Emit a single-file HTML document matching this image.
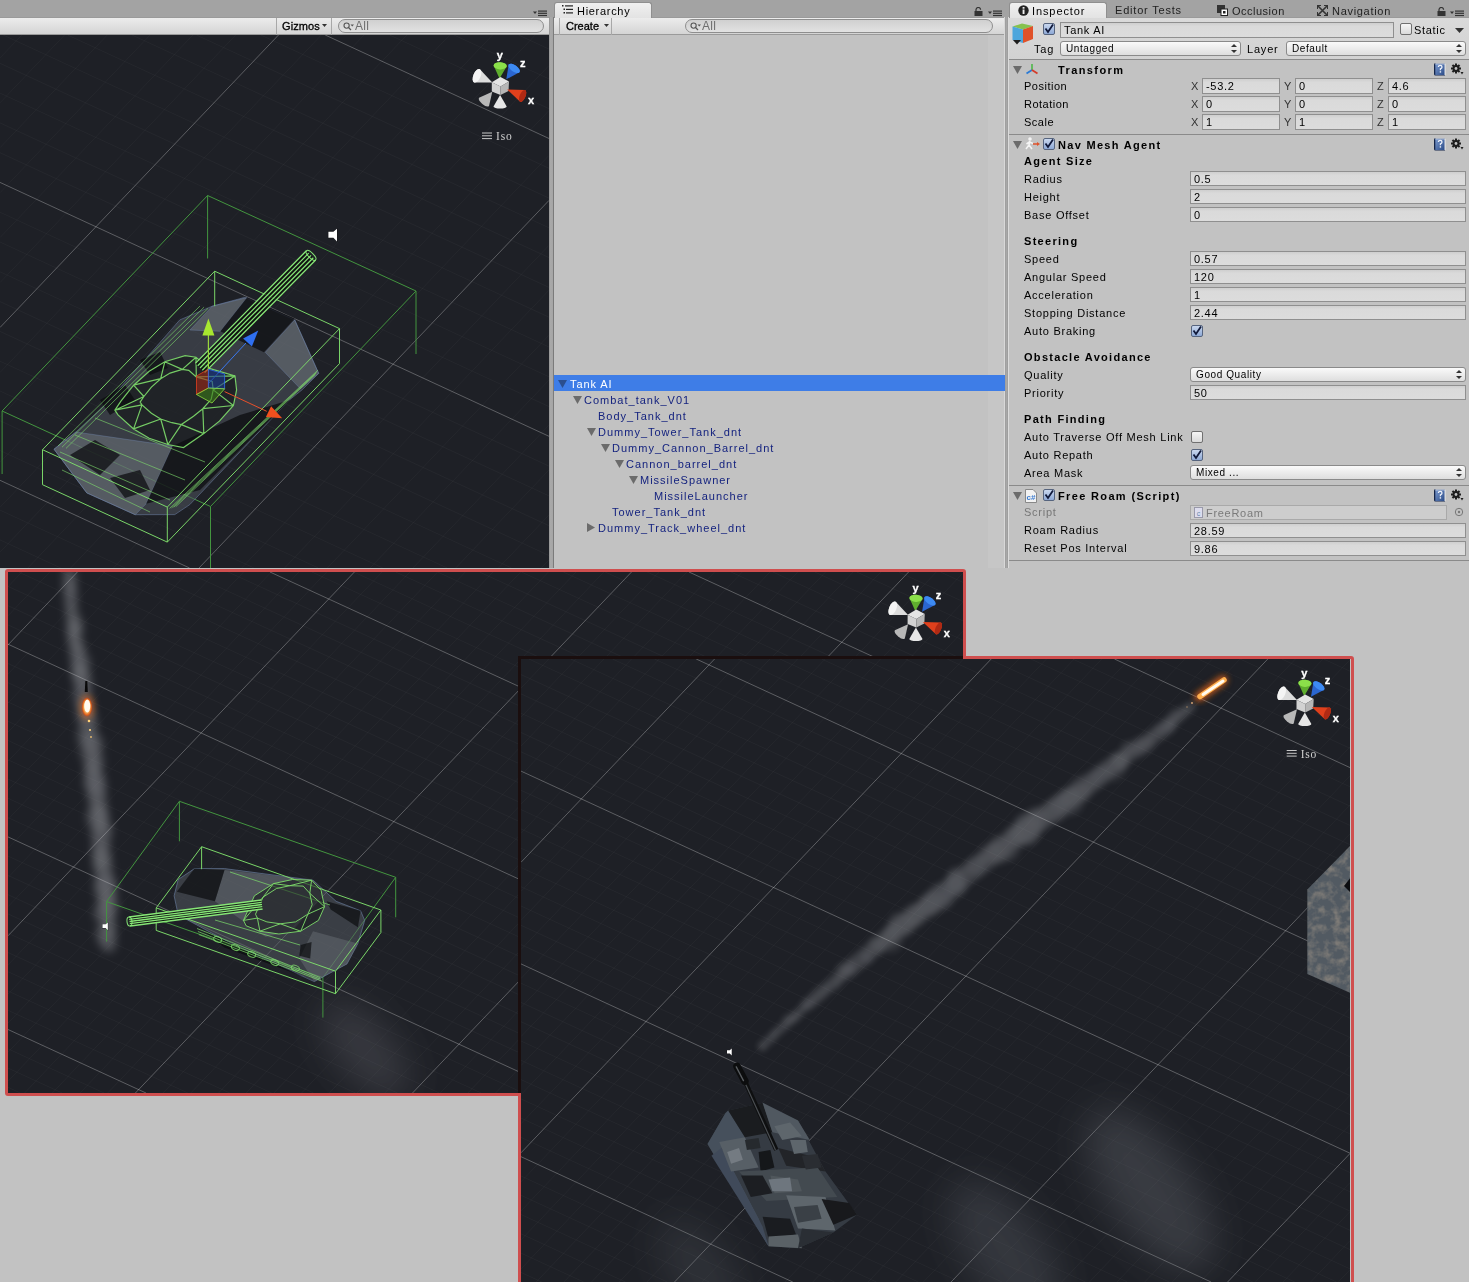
<!DOCTYPE html>
<html><head><meta charset="utf-8"><title>Unity</title>
<style>
html,body{margin:0;padding:0}
body{width:1469px;height:1282px;position:relative;overflow:hidden;background:#c2c2c2;font-family:"Liberation Sans",sans-serif;font-size:11px;color:#000}
.a{position:absolute}
svg{position:absolute;display:block;overflow:hidden}
.tb{background:linear-gradient(#ececec,#d4d4d4);border-bottom:1px solid #9a9a9a;box-sizing:border-box}
.tab{background:linear-gradient(#f0f0f0,#e3e3e3);border:1px solid #8f8f8f;border-bottom:none;border-radius:3px 3px 0 0;box-sizing:border-box}
.lbl{position:absolute;white-space:nowrap;line-height:12px;will-change:transform}
.fld{position:absolute;box-sizing:border-box;border:1px solid #8f8f8f;background:linear-gradient(#cfcfcf,#dadada 25%,#dcdcdc);height:15px}
.ftxt{position:absolute;left:3px;top:1px;line-height:12px;white-space:nowrap;letter-spacing:0.7px;will-change:transform}
.dd{position:absolute;box-sizing:border-box;border:1px solid #8a8a8a;border-radius:3px;background:linear-gradient(#fafafa,#dedede);height:15px}
.updn{position:absolute;top:2px;width:6px;height:9px;background:linear-gradient(#333,#333) 0 0/0 0 no-repeat}
.updn:before{content:"";position:absolute;left:0;top:0;border-left:3px solid transparent;border-right:3px solid transparent;border-bottom:3.5px solid #333}
.updn:after{content:"";position:absolute;left:0;top:5.5px;border-left:3px solid transparent;border-right:3px solid transparent;border-top:3.5px solid #333}
.cb{position:absolute;box-sizing:border-box;width:12px;height:12px;border:1px solid #707070;border-radius:2px;background:linear-gradient(#f6f6f6,#dadada)}
.cbon{background:linear-gradient(#c9d7ee,#8ea9d6);border-color:#56647e}
</style></head>
<body>
<svg width="0" height="0" style="left:0;top:0"><defs><filter id="blur6" x="-50%" y="-50%" width="200%" height="200%"><feGaussianBlur stdDeviation="6"/></filter><filter id="blur3" x="-50%" y="-50%" width="200%" height="200%"><feGaussianBlur stdDeviation="3"/></filter><filter id="blur15" x="-50%" y="-50%" width="200%" height="200%"><feGaussianBlur stdDeviation="18"/></filter><filter id="blur4" x="-50%" y="-50%" width="200%" height="200%"><feGaussianBlur stdDeviation="4"/></filter><filter id="blur2" x="-50%" y="-50%" width="200%" height="200%"><feGaussianBlur stdDeviation="2.5"/></filter><filter id="noiseTex" x="0" y="0" width="100%" height="100%"><feTurbulence type="fractalNoise" baseFrequency="0.12" numOctaves="3" seed="11"/><feColorMatrix type="matrix" values="0 0 0 0 0.50  0 0 0 0 0.40  0 0 0 0 0.30  1.8 0 0 0 -0.75"/><feComposite in2="SourceGraphic" operator="in"/></filter><filter id="blur1" x="-50%" y="-50%" width="200%" height="200%"><feGaussianBlur stdDeviation="1.2"/></filter><radialGradient id="flame" cx="50%" cy="50%" r="50%"><stop offset="0" stop-color="#fffbe8"/><stop offset="0.45" stop-color="#ffd27a"/><stop offset="0.8" stop-color="#e8631a" stop-opacity="0.9"/><stop offset="1" stop-color="#c23a10" stop-opacity="0"/></radialGradient></defs></svg>
<div class="a" style="left:0;top:0;width:1469px;height:17px;background:#a3a3a3"></div>
<div class="a tb" style="left:0;top:17px;width:549px;height:18px;border-top:1px solid #9a9a9a"></div>
<svg style="left:0px;top:35px;will-change:transform" width="549" height="533" viewBox="0 35 549 533">
<rect x="0" y="35" width="549" height="533" fill="#1e2026"/>
<path d="M518.5 35.0L549.0 49.1M454.0 35.0L549.0 78.9M389.6 35.0L549.0 108.7M260.8 35.0L549.0 168.3M196.4 35.0L549.0 198.1M132.0 35.0L549.0 227.8M21.8 35.0L0.0 57.9M67.6 35.0L549.0 257.6M64.6 35.0L0.0 102.8M3.2 35.0L549.0 287.4M107.3 35.0L0.0 147.7M0.0 63.3L549.0 317.2M150.1 35.0L0.0 192.7M0.0 93.1L549.0 347.0M192.9 35.0L0.0 237.6M0.0 122.9L549.0 376.8M235.7 35.0L0.0 282.6M0.0 152.7L549.0 406.6M321.3 35.0L-0.0 372.5M0.0 212.2L549.0 466.1M364.1 35.0L-0.0 417.4M0.0 242.0L549.0 495.9M406.9 35.0L0.0 462.4M0.0 271.8L549.0 525.7M449.7 35.0L0.0 507.3M0.0 301.6L549.0 555.5M492.5 35.0L0.0 552.2M0.0 331.4L511.6 568.0M535.3 35.0L27.8 568.0M0.0 361.2L447.2 568.0M549.0 65.5L70.6 568.0M0.0 391.0L382.8 568.0M549.0 110.5L113.4 568.0M0.0 420.7L318.4 568.0M549.0 155.4L156.2 568.0M0.0 450.5L254.0 568.0M549.0 245.3L241.7 568.0M0.0 510.1L125.2 568.0M549.0 290.2L284.5 568.0M0.0 539.9L60.8 568.0M549.0 335.2L327.3 568.0M549.0 380.1L370.1 568.0M549.0 425.1L412.9 568.0M549.0 470.0L455.7 568.0M549.0 515.0L498.5 568.0M549.0 559.9L541.3 568.0" stroke="#ffffff" stroke-opacity="0.032" stroke-width="1" fill="none"/>
<path d="M325.2 35.0L549.0 138.5M278.5 35.0L-0.0 327.5M0.0 182.4L549.0 436.3M549.0 200.4L199.0 568.0M0.0 480.3L189.6 568.0" stroke="#ffffff" stroke-opacity="0.28" stroke-width="1" fill="none"/>
<path d="M2.1 411.0L207.6 195.5L416.0 291.0L210.5 506.5ZM207.6 195.5V258.5M416.0 291.0V354.0M2.1 411.0V474.0M210.5 506.5V569.5" stroke="#43953f" stroke-opacity="1.0" stroke-width="1.0" fill="none"/>
<polygon points="212.2,306.2 244.7,297.4 294.6,319.9 318.7,373.4 302.1,389.8 289.6,399.8 189.8,504.6 174.8,514.6 135.2,514.7 86.8,492.9 54.0,449.2 75.9,432.0 105.0,405.0 179.8,319.9" fill="#4e545c" fill-opacity="0.55" stroke="#6d82a6" stroke-opacity="0.55" stroke-width="1"/>
<polygon points="294.8,320.0 318.7,373.4 300.4,388.8 265.3,352.3" fill="#7a8088" fill-opacity="0.45" stroke="#7088b0" stroke-opacity="0.4"/>
<polygon points="54.0,449.2 75.9,432.0 172.6,446.1 146.1,503.8 135.2,514.7 86.8,492.9" fill="#7a8088" fill-opacity="0.45" stroke="#7088b0" stroke-opacity="0.4"/>
<polygon points="212.2,306.2 247.0,297.6 220.4,331.3 190.0,330.0" fill="#7a8088" fill-opacity="0.45" stroke="#7088b0" stroke-opacity="0.4"/>
<polygon points="247.0,297.6 294.8,318.6 263.9,352.3 220.4,331.3" fill="#08090b" fill-opacity="0.7"/>
<polygon points="172.6,446.1 240.0,415.0 290.0,400.0 200.0,490.0 146.1,503.8" fill="#08090b" fill-opacity="0.7"/>
<polygon points="70.0,455.0 95.0,440.0 120.0,455.0 100.0,475.0" fill="#08090b" fill-opacity="0.7"/>
<polygon points="110.0,478.0 140.0,470.0 150.0,490.0 125.0,498.0" fill="#08090b" fill-opacity="0.7"/>
<polygon points="140.0,360.0 160.0,352.0 168.0,368.0 150.0,375.0" fill="#08090b" fill-opacity="0.7"/>
<polygon points="100.0,400.0 125.0,385.0 135.0,400.0 110.0,415.0" fill="#08090b" fill-opacity="0.7"/>
<path d="M42.5 449.7L214.7 271.2L339.5 328.6L167.3 507.1ZM214.7 271.2V306.2M339.5 328.6V363.6M42.5 449.7V484.7M167.3 507.1V542.1M42.5 484.7L167.3 542.1L339.5 363.6" stroke="#7ede6c" stroke-opacity="0.95" stroke-width="1.0" fill="none"/>
<path d="M169.5 508.5L318.0 370.0M171.6 507.9L317.1 371.5M173.7 507.3L316.2 373.0M175.8 506.7L315.3 374.5M58.0 446.0L200.0 306.0M62.0 447.2L204.0 307.2M66.0 448.4L208.0 308.4M60 452L170 500M75 435L185 480M95 418L205 462M62 470L150 512" stroke="#7ede6c" stroke-opacity="0.6" stroke-width="1" fill="none"/>
<polygon points="114.9,410.2 121.1,400.8 133.6,385.2 149.2,371.2 164.8,361.8 185.1,355.6 196.0,357.2 208.5,368.1 235.0,375.9 236.6,389.9 233.4,405.5 219.4,421.1 203.8,433.6 183.5,447.6 167.9,444.5 149.2,438.3 133.6,428.9 118.0,414.9" fill="#0c0e10" fill-opacity="0.55"/><path d="M114.9 410.2L121.1 400.8L133.6 385.2L149.2 371.2L164.8 361.8L185.1 355.6L196.0 357.2L208.5 368.1L235.0 375.9L236.6 389.9L233.4 405.5L219.4 421.1L203.8 433.6L183.5 447.6L167.9 444.5L149.2 438.3L133.6 428.9L118.0 414.9ZM140.1 402.1L143.9 396.5L151.4 387.1L160.7 378.7L170.1 373.1L182.3 369.4L188.8 370.3L196.3 376.9L212.2 381.5L213.2 389.9L211.2 399.3L202.8 408.7L193.5 416.2L181.3 424.6L171.9 422.7L160.7 419.0L151.4 413.3L142.0 404.9ZM114.9 410.2L143.9 396.5M133.6 385.2L143.9 396.5M133.6 385.2L160.7 378.7M164.8 361.8L160.7 378.7M164.8 361.8L182.3 369.4M196.0 357.2L182.3 369.4M196.0 357.2L196.3 376.9M235.0 375.9L196.3 376.9M235.0 375.9L213.2 389.9M233.4 405.5L213.2 389.9M233.4 405.5L202.8 408.7M203.8 433.6L202.8 408.7M203.8 433.6L181.3 424.6M167.9 444.5L181.3 424.6M167.9 444.5L160.7 419.0M133.6 428.9L160.7 419.0M133.6 428.9L142.0 404.9M114.9 410.2L142.0 404.9" stroke="#7ede6c" stroke-width="1.2" stroke-opacity="0.9" fill="none"/>
<polygon points="306.4,250.8 195.4,363.4 204.6,372.6 315.6,260.0" fill="#0e100e" opacity="0.8"/><path d="M315.6 260.0L204.6 372.6M313.3 257.7L202.3 370.3M311.0 255.4L200.0 368.0M308.7 253.1L197.7 365.7M306.4 250.8L195.4 363.4" stroke="#86e676" stroke-opacity="1.0" stroke-width="1.3" fill="none"/><ellipse cx="311.0" cy="255.4" rx="2.5" ry="6.5" transform="rotate(134.6 311.0 255.4)" fill="none" stroke="#86e676" stroke-opacity="1.0"/>
<path d="M208.4 370.6 V335" stroke="#9ad63a" stroke-width="1.2"/>
<polygon points="208.4,318.6 202.4,335.5 214.4,335.5" fill="#a8e830"/>
<path d="M209 383 L246 343" stroke="#3a78f0" stroke-width="1"/>
<polygon points="258.3,330.6 243.1,338.5 251.9,346.5" fill="#2f6ff0"/>
<path d="M224.6 391.6 L266.7 411.3" stroke="#e8502a" stroke-width="1"/>
<polygon points="282.2,418.3 271.1,406.3 265.9,417.1" fill="#f0501e"/>
<polygon points="196.5,376 208.4,369.2 208.4,388 196.5,394.5" fill="#a02818" fill-opacity="0.6" stroke="#e04020" stroke-width="0.8"/>
<polygon points="208.4,369.2 224.6,374 224.6,388.8 208.4,388" fill="#1a3a90" fill-opacity="0.6" stroke="#3070f0" stroke-width="0.8"/>
<polygon points="196.5,394.5 208.4,388 224.6,388.8 212,403" fill="#3a7a18" fill-opacity="0.6" stroke="#90e040" stroke-width="0.8"/>
<g transform="translate(328.4 228.8) scale(1.0)"><path d="M-0.5 2.5 H5.2 L9.2 -0.6 V13.3 L5.2 9.5 H-0.5Z" fill="#111" opacity="0.7"/><path d="M0 3 H5 L8.6 0 V12.7 L5 9 H0Z" fill="#fff"/></g>
<g transform="translate(0 0)">
<path d="M492.3 82.4L479.9 69.2A7.2 3.6 -66.7 0 0 474.1 82.4Z" fill="#dcdcdc"/><ellipse cx="477.0" cy="75.8" rx="7.2" ry="3.6" transform="rotate(-66.7 477.0 75.8)" fill="#f4f4f4"/>
<path d="M492.3 91.8L479.0 97.8A6.5 2.9 -140.6 0 0 489.0 106.0Z" fill="#b8b8b8"/>
<path d="M500.1 95.0L493.5 106.5A6.6 2.1 180.0 0 0 506.7 106.5Z" fill="#e6e6e6"/>
<path d="M499.5 78.5L506.8 66.2A6.6 3.6 3.2 0 0 493.6 65.4Z" fill="#5fae2e"/><ellipse cx="500.2" cy="65.8" rx="6.6" ry="3.6" transform="rotate(3.2 500.2 65.8)" fill="#8be04a"/>
<path d="M506.3 79.3L519.5 72.2A6.6 3.3 35.6 0 0 508.7 64.6Z" fill="#2b66d0"/><ellipse cx="514.1" cy="68.4" rx="6.6" ry="3.3" transform="rotate(35.6 514.1 68.4)" fill="#3d8af2"/>
<path d="M491.8 82.3 L500.5 77 L509 81.6 L500.5 86.6Z" fill="#e4e4e4"/>
<path d="M491.8 82.3 L500.5 86.6 L500.5 95 L491.8 91.6Z" fill="#d2d2d2"/>
<path d="M500.5 86.6 L509 81.6 L508.5 91 L500.5 95Z" fill="#b6b6b6"/>
<path d="M507.1 89.4L520.1 101.8A6.4 2.9 112.8 0 0 525.1 90.0Z" fill="#e0401c"/><ellipse cx="522.6" cy="95.9" rx="6.4" ry="2.9" transform="rotate(112.8 522.6 95.9)" fill="#b02a14"/>
<text x="499.7" y="59.3" font-family="Liberation Sans" font-weight="bold" font-size="11" fill="#fff" stroke="#fff" stroke-width="0.3" text-anchor="middle">y</text>
<text x="522.7" y="66.8" font-family="Liberation Sans" font-weight="bold" font-size="11" fill="#fff" stroke="#fff" stroke-width="0.3" text-anchor="middle">z</text>
<text x="531" y="104" font-family="Liberation Sans" font-weight="bold" font-size="11" fill="#fff" stroke="#fff" stroke-width="0.3" text-anchor="middle">x</text>
<path d="M482 133 H492 M482 135.8 H492 M482 138.6 H492" stroke="#c8c8c8" stroke-width="1"/>
<text x="496" y="140.3" font-family="Liberation Serif" font-size="11.5" fill="#d0d0d0" letter-spacing="0.8">Iso</text>
</g>
</svg><div class="a" style="left:549px;top:17px;width:5px;height:551px;background:linear-gradient(90deg,#8a8a8a 0,#a9a9a9 1px,#a6a6a6 3.5px,#7b7b7b 3.6px,#7b7b7b 4.5px,#dadada 4.6px)"></div>
<div class="a tb" style="left:554px;top:17px;width:451px;height:18px;border-top:1px solid #9a9a9a"></div>
<div class="a tab" style="left:554px;top:2px;width:98px;height:16px"></div>
<div class="a" style="left:988px;top:35px;width:16px;height:533px;background:#c6c6c6"></div>
<div class="a" style="left:1004px;top:17px;width:5px;height:551px;background:linear-gradient(90deg,#d8d8d8 0,#d8d8d8 0.8px,#9c9c9c 1px,#a8a8a8 2.5px,#9a9a9a 4px,#dcdcdc 4.3px)"></div>
<div class="a" style="left:1009px;top:17px;width:460px;height:43px;background:linear-gradient(#dadada,#d2d2d2);border-top:1px solid #9a9a9a;box-sizing:border-box"></div>
<div class="a tab" style="left:1009px;top:2px;width:98px;height:16px"></div>
<div class="a" style="left:276px;top:18px;width:1px;height:17px;background:#a8a8a8"></div>
<div class="lbl" style="left:282px;top:20px;font-size:11px;letter-spacing:0.1px;color:#000;-webkit-text-stroke:0.3px #000">Gizmos</div>
<svg class="a" style="left:322px;top:24px" width="5" height="3"><path d="M0 0 L5 0 L2.5 3Z" fill="#333"/></svg>
<div class="a" style="left:331px;top:18px;width:1px;height:17px;background:#a8a8a8"></div>
<div class="a" style="left:338px;top:19px;width:206px;height:14px;box-sizing:border-box;border:1px solid #8e8e8e;border-radius:7px;background:linear-gradient(#d0d0d0,#e2e2e2)"><svg width="14" height="10" style="left:4px;top:2px"><circle cx="3.6" cy="3.6" r="2.6" stroke="#555" stroke-width="1.1" fill="none"/><path d="M5.5 5.5 L8 8" stroke="#555" stroke-width="1.3"/><path d="M7.5 2.5 L11 2.5 L9.25 4.5Z" fill="#555"/></svg><div class="ftxt" style="left:16px;top:-0.5px;color:#6e6e6e;font-size:12px;letter-spacing:0.3px">All</div></div>
<svg class="a" style="left:533px;top:10px" width="15" height="7"><path d="M0 1.5 L4 1.5 L2 4 Z" fill="#333"/><rect x="5" y="0.5" width="9" height="1.2" fill="#333"/><rect x="5" y="2.7" width="9" height="1.2" fill="#333"/><rect x="5" y="4.9" width="9" height="1.2" fill="#333"/></svg>
<svg class="a" style="left:562px;top:5px" width="12" height="9"><rect x="0" y="0" width="1.5" height="1.5" fill="#222"/><rect x="3" y="0.3" width="8" height="1.2" fill="#222"/><rect x="1.5" y="3.5" width="1.5" height="1.5" fill="#222"/><rect x="4" y="3.8" width="7" height="1.2" fill="#222"/><rect x="1.5" y="7" width="1.5" height="1.5" fill="#222"/><rect x="4" y="7.3" width="7" height="1.2" fill="#222"/></svg>
<div class="lbl" style="left:577px;top:5px;font-size:11px;letter-spacing:0.7px;">Hierarchy</div>
<div class="a" style="left:559px;top:18px;width:1px;height:17px;background:#a8a8a8"></div>
<div class="lbl" style="left:565.5px;top:20px;font-size:11px;letter-spacing:0px;color:#000;-webkit-text-stroke:0.3px #000">Create</div>
<svg class="a" style="left:604px;top:24px" width="5" height="3"><path d="M0 0 L5 0 L2.5 3Z" fill="#333"/></svg>
<div class="a" style="left:611px;top:18px;width:1px;height:17px;background:#a8a8a8"></div>
<div class="a" style="left:685px;top:19px;width:308px;height:14px;box-sizing:border-box;border:1px solid #8e8e8e;border-radius:7px;background:linear-gradient(#d0d0d0,#e2e2e2)"><svg width="14" height="10" style="left:4px;top:2px"><circle cx="3.6" cy="3.6" r="2.6" stroke="#555" stroke-width="1.1" fill="none"/><path d="M5.5 5.5 L8 8" stroke="#555" stroke-width="1.3"/><path d="M7.5 2.5 L11 2.5 L9.25 4.5Z" fill="#555"/></svg><div class="ftxt" style="left:16px;top:-0.5px;color:#6e6e6e;font-size:12px;letter-spacing:0.3px">All</div></div>
<svg class="a" style="left:974px;top:7px" width="9" height="9"><path d="M2 4 V2.8 A2.3 2.3 0 0 1 6.6 2.8" stroke="#333" stroke-width="1.2" fill="none"/><rect x="0.5" y="4" width="8" height="5" fill="#333"/></svg>
<svg class="a" style="left:988px;top:10px" width="15" height="7"><path d="M0 1.5 L4 1.5 L2 4 Z" fill="#333"/><rect x="5" y="0.5" width="9" height="1.2" fill="#333"/><rect x="5" y="2.7" width="9" height="1.2" fill="#333"/><rect x="5" y="4.9" width="9" height="1.2" fill="#333"/></svg>
<div class="a" style="left:554px;top:375px;width:451px;height:16px;background:#3e7de7"></div>
<svg class="a" style="left:558px;top:380px" width="9" height="8"><path d="M0 0 L9 0 L4.5 8 Z" fill="#2b4f8f"/></svg>
<div class="lbl" style="left:570px;top:378px;font-size:11px;letter-spacing:0.9px;color:#fff;">Tank AI</div>
<svg class="a" style="left:572.5px;top:395.5px" width="9" height="8"><path d="M0 0 L9 0 L4.5 8 Z" fill="#6b6b6b"/></svg>
<div class="lbl" style="left:584px;top:394px;font-size:11px;letter-spacing:1.0px;color:#15237f;">Combat_tank_V01</div>
<div class="lbl" style="left:598px;top:410px;font-size:11px;letter-spacing:1.0px;color:#15237f;">Body_Tank_dnt</div>
<svg class="a" style="left:586.5px;top:427.5px" width="9" height="8"><path d="M0 0 L9 0 L4.5 8 Z" fill="#6b6b6b"/></svg>
<div class="lbl" style="left:598px;top:426px;font-size:11px;letter-spacing:1.0px;color:#15237f;">Dummy_Tower_Tank_dnt</div>
<svg class="a" style="left:600.5px;top:443.5px" width="9" height="8"><path d="M0 0 L9 0 L4.5 8 Z" fill="#6b6b6b"/></svg>
<div class="lbl" style="left:612px;top:442px;font-size:11px;letter-spacing:1.0px;color:#15237f;">Dummy_Cannon_Barrel_dnt</div>
<svg class="a" style="left:614.5px;top:459.5px" width="9" height="8"><path d="M0 0 L9 0 L4.5 8 Z" fill="#6b6b6b"/></svg>
<div class="lbl" style="left:626px;top:458px;font-size:11px;letter-spacing:1.0px;color:#15237f;">Cannon_barrel_dnt</div>
<svg class="a" style="left:628.5px;top:475.5px" width="9" height="8"><path d="M0 0 L9 0 L4.5 8 Z" fill="#6b6b6b"/></svg>
<div class="lbl" style="left:640px;top:474px;font-size:11px;letter-spacing:1.0px;color:#15237f;">MissileSpawner</div>
<div class="lbl" style="left:654px;top:490px;font-size:11px;letter-spacing:1.0px;color:#15237f;">MissileLauncher</div>
<div class="lbl" style="left:612px;top:506px;font-size:11px;letter-spacing:1.0px;color:#15237f;">Tower_Tank_dnt</div>
<svg class="a" style="left:587px;top:522.5px" width="8" height="9"><path d="M0 0 L8 4.5 L0 9 Z" fill="#6b6b6b"/></svg>
<div class="lbl" style="left:598px;top:522px;font-size:11px;letter-spacing:1.0px;color:#15237f;">Dummy_Track_wheel_dnt</div>
<svg class="a" style="left:1018px;top:5px" width="11" height="11"><circle cx="5.5" cy="5.5" r="5.2" fill="#222"/><rect x="4.6" y="4.5" width="1.9" height="4.5" fill="#eee"/><rect x="4.6" y="2" width="1.9" height="1.7" fill="#eee"/></svg>
<div class="lbl" style="left:1032px;top:5px;font-size:11px;letter-spacing:0.9px;">Inspector</div>
<div class="lbl" style="left:1115px;top:4px;font-size:11px;letter-spacing:0.8px;color:#222;">Editor Tests</div>
<svg class="a" style="left:1217px;top:5px" width="11" height="11"><rect x="0" y="0" width="8" height="8" fill="#333"/><rect x="4" y="4" width="6.5" height="6.5" fill="#fff" stroke="#222"/><rect x="6" y="6" width="2.5" height="2.5" fill="#222"/></svg>
<div class="lbl" style="left:1232px;top:5px;font-size:11px;letter-spacing:0.5px;color:#222;">Occlusion</div>
<svg class="a" style="left:1317px;top:5px" width="11" height="11"><path d="M1 1 L10 10 M10 1 L1 10" stroke="#333" stroke-width="1.6"/><path d="M0 0 H4 M0 0 V4 M11 0 H7 M11 0 V4 M0 11 H4 M0 11 V7 M11 11 H7 M11 11 V7" stroke="#333" stroke-width="2"/></svg>
<div class="lbl" style="left:1332px;top:5px;font-size:11px;letter-spacing:0.7px;color:#222;">Navigation</div>
<svg class="a" style="left:1437px;top:7px" width="9" height="9"><path d="M2 4 V2.8 A2.3 2.3 0 0 1 6.6 2.8" stroke="#333" stroke-width="1.2" fill="none"/><rect x="0.5" y="4" width="8" height="5" fill="#333"/></svg>
<svg class="a" style="left:1450px;top:10px" width="15" height="7"><path d="M0 1.5 L4 1.5 L2 4 Z" fill="#333"/><rect x="5" y="0.5" width="9" height="1.2" fill="#333"/><rect x="5" y="2.7" width="9" height="1.2" fill="#333"/><rect x="5" y="4.9" width="9" height="1.2" fill="#333"/></svg>
<svg class="a" style="left:1011px;top:22px" width="24" height="24"><path d="M1.5 4.5 L11 1.5 L22 4 L12 7.5 Z" fill="#86c24e"/><path d="M1.5 4.5 L12 7.5 L12 21 L1.5 18 Z" fill="#4ea6dc"/><path d="M12 7.5 L22 4 L22 17 L12 21 Z" fill="#e0522a"/><path d="M2 18 L10 18 L6 22.5 Z" fill="#1e1e1e"/></svg>
<div class="cb cbon" style="left:1043px;top:23px"><svg width="12" height="12" style="left:-1px;top:-1px"><path d="M2.5 5.5 L5 9 L10 1.5" stroke="#10193a" stroke-width="1.8" fill="none"/></svg></div>
<div class="fld" style="left:1060px;top:22px;width:334px;height:16px"><div class="ftxt" style="">Tank AI</div></div>
<div class="cb" style="left:1400px;top:23px"></div>
<div class="lbl" style="left:1414px;top:24px;font-size:11px;letter-spacing:0.7px;">Static</div>
<svg class="a" style="left:1455px;top:28px" width="9" height="5"><path d="M0 0 L9 0 L4.5 5Z" fill="#333"/></svg>
<div class="lbl" style="left:1034px;top:43px;font-size:11px;letter-spacing:0.8px;">Tag</div>
<div class="dd" style="left:1060px;top:41px;width:181px;height:15px"><div class="ftxt" style="left:5px;top:1px;font-size:10px;letter-spacing:0.6px">Untagged</div><div class="updn" style="left:170px"></div></div>
<div class="lbl" style="left:1247px;top:43px;font-size:11px;letter-spacing:0.8px;">Layer</div>
<div class="dd" style="left:1286px;top:41px;width:180px;height:15px"><div class="ftxt" style="left:5px;top:1px;font-size:10px;letter-spacing:0.6px">Default</div><div class="updn" style="left:169px"></div></div>
<div class="a" style="left:1009px;top:59px;width:460px;height:1px;background:#8a8a8a"></div>
<svg class="a" style="left:1013px;top:66px" width="9" height="8"><path d="M0 0 L9 0 L4.5 8 Z" fill="#6b6b6b"/></svg>
<svg class="a" style="left:1025px;top:63px" width="14" height="12"><path d="M7 1 V7" stroke="#4cb848" stroke-width="1.6"/><path d="M7 7 L1.5 10.5" stroke="#2a7ad6" stroke-width="1.8"/><path d="M7 7 L12.5 10.5" stroke="#d43b2a" stroke-width="1.8"/></svg>
<div class="lbl" style="left:1058px;top:64px;font-size:11px;letter-spacing:1.4px;font-weight:bold;">Transform</div>
<svg class="a" style="left:1433px;top:62px" width="33" height="15"><defs><linearGradient id="bk143362" x1="0" y1="0" x2="1" y2="1"><stop offset="0" stop-color="#7a9ad0"/><stop offset="1" stop-color="#2a4a86"/></linearGradient></defs><path d="M1 2.5 Q1 1 2.5 1 H12 V13.5 H2.5 Q1 13.5 1 12Z" fill="#14254a"/><rect x="2.3" y="1.6" width="9.6" height="11.4" fill="url(#bk143362)"/><path d="M2.3 1.8 H12 V13" stroke="#f4f4f4" stroke-width="0.9" fill="none"/><path d="M5.3 5 Q5.5 3.3 7.2 3.3 Q9 3.3 9 5 Q9 6.2 7.4 6.8 V8.2" stroke="#eef2fa" stroke-width="1.3" fill="none"/><rect x="6.7" y="9.2" width="1.4" height="1.4" fill="#eef2fa"/><g transform="translate(23 6.5)"><circle r="3.4" fill="#1e1e1e"/><circle r="1.4" fill="#c2c2c2"/><rect x="-1" y="-5" width="2" height="2.6" fill="#1e1e1e" transform="rotate(0)"/><rect x="-1" y="-5" width="2" height="2.6" fill="#1e1e1e" transform="rotate(45)"/><rect x="-1" y="-5" width="2" height="2.6" fill="#1e1e1e" transform="rotate(90)"/><rect x="-1" y="-5" width="2" height="2.6" fill="#1e1e1e" transform="rotate(135)"/><rect x="-1" y="-5" width="2" height="2.6" fill="#1e1e1e" transform="rotate(180)"/><rect x="-1" y="-5" width="2" height="2.6" fill="#1e1e1e" transform="rotate(225)"/><rect x="-1" y="-5" width="2" height="2.6" fill="#1e1e1e" transform="rotate(270)"/><rect x="-1" y="-5" width="2" height="2.6" fill="#1e1e1e" transform="rotate(315)"/></g><path d="M27.5 10 L30.5 10 L29 12.5 Z" fill="#1e1e1e"/></svg>
<div class="lbl" style="left:1024px;top:80px;font-size:11px;letter-spacing:0.5px;">Position</div>
<div class="lbl" style="left:1191px;top:80px;font-size:11px;letter-spacing:0px;color:#333;">X</div>
<div class="fld" style="left:1202px;top:78px;width:78px;height:16px"><div class="ftxt" style="">-53.2</div></div>
<div class="lbl" style="left:1284px;top:80px;font-size:11px;letter-spacing:0px;color:#333;">Y</div>
<div class="fld" style="left:1295px;top:78px;width:78px;height:16px"><div class="ftxt" style="">0</div></div>
<div class="lbl" style="left:1377px;top:80px;font-size:11px;letter-spacing:0px;color:#333;">Z</div>
<div class="fld" style="left:1388px;top:78px;width:78px;height:16px"><div class="ftxt" style="">4.6</div></div>
<div class="lbl" style="left:1024px;top:98px;font-size:11px;letter-spacing:0.5px;">Rotation</div>
<div class="lbl" style="left:1191px;top:98px;font-size:11px;letter-spacing:0px;color:#333;">X</div>
<div class="fld" style="left:1202px;top:96px;width:78px;height:16px"><div class="ftxt" style="">0</div></div>
<div class="lbl" style="left:1284px;top:98px;font-size:11px;letter-spacing:0px;color:#333;">Y</div>
<div class="fld" style="left:1295px;top:96px;width:78px;height:16px"><div class="ftxt" style="">0</div></div>
<div class="lbl" style="left:1377px;top:98px;font-size:11px;letter-spacing:0px;color:#333;">Z</div>
<div class="fld" style="left:1388px;top:96px;width:78px;height:16px"><div class="ftxt" style="">0</div></div>
<div class="lbl" style="left:1024px;top:116px;font-size:11px;letter-spacing:0.5px;">Scale</div>
<div class="lbl" style="left:1191px;top:116px;font-size:11px;letter-spacing:0px;color:#333;">X</div>
<div class="fld" style="left:1202px;top:114px;width:78px;height:16px"><div class="ftxt" style="">1</div></div>
<div class="lbl" style="left:1284px;top:116px;font-size:11px;letter-spacing:0px;color:#333;">Y</div>
<div class="fld" style="left:1295px;top:114px;width:78px;height:16px"><div class="ftxt" style="">1</div></div>
<div class="lbl" style="left:1377px;top:116px;font-size:11px;letter-spacing:0px;color:#333;">Z</div>
<div class="fld" style="left:1388px;top:114px;width:78px;height:16px"><div class="ftxt" style="">1</div></div>
<div class="a" style="left:1009px;top:134px;width:460px;height:1px;background:#8a8a8a"></div>
<svg class="a" style="left:1013px;top:141px" width="9" height="8"><path d="M0 0 L9 0 L4.5 8 Z" fill="#6b6b6b"/></svg>
<svg class="a" style="left:1025px;top:137px" width="16" height="14"><circle cx="5" cy="2" r="1.8" fill="#f4f4f4"/><path d="M5 4 L4 8 L1 12 M4 8 L7 12 M4.5 5 L1.5 7 M4.5 5 L8 6.5" stroke="#f4f4f4" stroke-width="1.6" fill="none"/><path d="M8 7 H13" stroke="#e0522a" stroke-width="1.5"/><path d="M12 5 L15 7 L12 9Z" fill="#e0522a"/></svg>
<div class="cb cbon" style="left:1043px;top:138px"><svg width="12" height="12" style="left:-1px;top:-1px"><path d="M2.5 5.5 L5 9 L10 1.5" stroke="#10193a" stroke-width="1.8" fill="none"/></svg></div>
<div class="lbl" style="left:1058px;top:139px;font-size:11px;letter-spacing:1.3px;font-weight:bold;">Nav Mesh Agent</div>
<svg class="a" style="left:1433px;top:137px" width="33" height="15"><defs><linearGradient id="bk1433137" x1="0" y1="0" x2="1" y2="1"><stop offset="0" stop-color="#7a9ad0"/><stop offset="1" stop-color="#2a4a86"/></linearGradient></defs><path d="M1 2.5 Q1 1 2.5 1 H12 V13.5 H2.5 Q1 13.5 1 12Z" fill="#14254a"/><rect x="2.3" y="1.6" width="9.6" height="11.4" fill="url(#bk1433137)"/><path d="M2.3 1.8 H12 V13" stroke="#f4f4f4" stroke-width="0.9" fill="none"/><path d="M5.3 5 Q5.5 3.3 7.2 3.3 Q9 3.3 9 5 Q9 6.2 7.4 6.8 V8.2" stroke="#eef2fa" stroke-width="1.3" fill="none"/><rect x="6.7" y="9.2" width="1.4" height="1.4" fill="#eef2fa"/><g transform="translate(23 6.5)"><circle r="3.4" fill="#1e1e1e"/><circle r="1.4" fill="#c2c2c2"/><rect x="-1" y="-5" width="2" height="2.6" fill="#1e1e1e" transform="rotate(0)"/><rect x="-1" y="-5" width="2" height="2.6" fill="#1e1e1e" transform="rotate(45)"/><rect x="-1" y="-5" width="2" height="2.6" fill="#1e1e1e" transform="rotate(90)"/><rect x="-1" y="-5" width="2" height="2.6" fill="#1e1e1e" transform="rotate(135)"/><rect x="-1" y="-5" width="2" height="2.6" fill="#1e1e1e" transform="rotate(180)"/><rect x="-1" y="-5" width="2" height="2.6" fill="#1e1e1e" transform="rotate(225)"/><rect x="-1" y="-5" width="2" height="2.6" fill="#1e1e1e" transform="rotate(270)"/><rect x="-1" y="-5" width="2" height="2.6" fill="#1e1e1e" transform="rotate(315)"/></g><path d="M27.5 10 L30.5 10 L29 12.5 Z" fill="#1e1e1e"/></svg>
<div class="lbl" style="left:1024px;top:155px;font-size:11px;letter-spacing:1.3px;font-weight:bold;">Agent Size</div>
<div class="lbl" style="left:1024px;top:173px;font-size:11px;letter-spacing:0.75px;">Radius</div>
<div class="fld" style="left:1190px;top:171px;width:276px;height:15px"><div class="ftxt" style="">0.5</div></div>
<div class="lbl" style="left:1024px;top:191px;font-size:11px;letter-spacing:0.75px;">Height</div>
<div class="fld" style="left:1190px;top:189px;width:276px;height:15px"><div class="ftxt" style="">2</div></div>
<div class="lbl" style="left:1024px;top:209px;font-size:11px;letter-spacing:0.75px;">Base Offset</div>
<div class="fld" style="left:1190px;top:207px;width:276px;height:15px"><div class="ftxt" style="">0</div></div>
<div class="lbl" style="left:1024px;top:235px;font-size:11px;letter-spacing:1.3px;font-weight:bold;">Steering</div>
<div class="lbl" style="left:1024px;top:253px;font-size:11px;letter-spacing:0.75px;">Speed</div>
<div class="fld" style="left:1190px;top:251px;width:276px;height:15px"><div class="ftxt" style="">0.57</div></div>
<div class="lbl" style="left:1024px;top:271px;font-size:11px;letter-spacing:0.75px;">Angular Speed</div>
<div class="fld" style="left:1190px;top:269px;width:276px;height:15px"><div class="ftxt" style="">120</div></div>
<div class="lbl" style="left:1024px;top:289px;font-size:11px;letter-spacing:0.75px;">Acceleration</div>
<div class="fld" style="left:1190px;top:287px;width:276px;height:15px"><div class="ftxt" style="">1</div></div>
<div class="lbl" style="left:1024px;top:307px;font-size:11px;letter-spacing:0.75px;">Stopping Distance</div>
<div class="fld" style="left:1190px;top:305px;width:276px;height:15px"><div class="ftxt" style="">2.44</div></div>
<div class="lbl" style="left:1024px;top:325px;font-size:11px;letter-spacing:0.75px;">Auto Braking</div>
<div class="cb cbon" style="left:1191px;top:325px"><svg width="12" height="12" style="left:-1px;top:-1px"><path d="M2.5 5.5 L5 9 L10 1.5" stroke="#10193a" stroke-width="1.8" fill="none"/></svg></div>
<div class="lbl" style="left:1024px;top:351px;font-size:11px;letter-spacing:1.3px;font-weight:bold;">Obstacle Avoidance</div>
<div class="lbl" style="left:1024px;top:369px;font-size:11px;letter-spacing:0.75px;">Quality</div>
<div class="dd" style="left:1190px;top:367px;width:276px;height:15px"><div class="ftxt" style="left:5px;top:1px;font-size:10px;letter-spacing:0.6px">Good Quality</div><div class="updn" style="left:265px"></div></div>
<div class="lbl" style="left:1024px;top:387px;font-size:11px;letter-spacing:0.75px;">Priority</div>
<div class="fld" style="left:1190px;top:385px;width:276px;height:15px"><div class="ftxt" style="">50</div></div>
<div class="lbl" style="left:1024px;top:413px;font-size:11px;letter-spacing:1.3px;font-weight:bold;">Path Finding</div>
<div class="lbl" style="left:1024px;top:431px;font-size:11px;letter-spacing:0.75px;">Auto Traverse Off Mesh Link</div>
<div class="cb" style="left:1191px;top:431px"></div>
<div class="lbl" style="left:1024px;top:449px;font-size:11px;letter-spacing:0.75px;">Auto Repath</div>
<div class="cb cbon" style="left:1191px;top:449px"><svg width="12" height="12" style="left:-1px;top:-1px"><path d="M2.5 5.5 L5 9 L10 1.5" stroke="#10193a" stroke-width="1.8" fill="none"/></svg></div>
<div class="lbl" style="left:1024px;top:467px;font-size:11px;letter-spacing:0.75px;">Area Mask</div>
<div class="dd" style="left:1190px;top:465px;width:276px;height:15px"><div class="ftxt" style="left:5px;top:1px;font-size:10px;letter-spacing:0.6px">Mixed ...</div><div class="updn" style="left:265px"></div></div>
<div class="a" style="left:1009px;top:485px;width:460px;height:1px;background:#8a8a8a"></div>
<svg class="a" style="left:1013px;top:492px" width="9" height="8"><path d="M0 0 L9 0 L4.5 8 Z" fill="#6b6b6b"/></svg>
<svg class="a" style="left:1025px;top:489px" width="12" height="14"><path d="M0.5 0.5 H8 L11.5 4 V13.5 H0.5 Z" fill="#f2f2f2" stroke="#888"/><text x="6" y="11" font-size="8" font-weight="bold" text-anchor="middle" fill="#3a7bd0" font-family="Liberation Sans">c#</text></svg>
<div class="cb cbon" style="left:1043px;top:489px"><svg width="12" height="12" style="left:-1px;top:-1px"><path d="M2.5 5.5 L5 9 L10 1.5" stroke="#10193a" stroke-width="1.8" fill="none"/></svg></div>
<div class="lbl" style="left:1058px;top:490px;font-size:11px;letter-spacing:1.35px;font-weight:bold;">Free Roam (Script)</div>
<svg class="a" style="left:1433px;top:488px" width="33" height="15"><defs><linearGradient id="bk1433488" x1="0" y1="0" x2="1" y2="1"><stop offset="0" stop-color="#7a9ad0"/><stop offset="1" stop-color="#2a4a86"/></linearGradient></defs><path d="M1 2.5 Q1 1 2.5 1 H12 V13.5 H2.5 Q1 13.5 1 12Z" fill="#14254a"/><rect x="2.3" y="1.6" width="9.6" height="11.4" fill="url(#bk1433488)"/><path d="M2.3 1.8 H12 V13" stroke="#f4f4f4" stroke-width="0.9" fill="none"/><path d="M5.3 5 Q5.5 3.3 7.2 3.3 Q9 3.3 9 5 Q9 6.2 7.4 6.8 V8.2" stroke="#eef2fa" stroke-width="1.3" fill="none"/><rect x="6.7" y="9.2" width="1.4" height="1.4" fill="#eef2fa"/><g transform="translate(23 6.5)"><circle r="3.4" fill="#1e1e1e"/><circle r="1.4" fill="#c2c2c2"/><rect x="-1" y="-5" width="2" height="2.6" fill="#1e1e1e" transform="rotate(0)"/><rect x="-1" y="-5" width="2" height="2.6" fill="#1e1e1e" transform="rotate(45)"/><rect x="-1" y="-5" width="2" height="2.6" fill="#1e1e1e" transform="rotate(90)"/><rect x="-1" y="-5" width="2" height="2.6" fill="#1e1e1e" transform="rotate(135)"/><rect x="-1" y="-5" width="2" height="2.6" fill="#1e1e1e" transform="rotate(180)"/><rect x="-1" y="-5" width="2" height="2.6" fill="#1e1e1e" transform="rotate(225)"/><rect x="-1" y="-5" width="2" height="2.6" fill="#1e1e1e" transform="rotate(270)"/><rect x="-1" y="-5" width="2" height="2.6" fill="#1e1e1e" transform="rotate(315)"/></g><path d="M27.5 10 L30.5 10 L29 12.5 Z" fill="#1e1e1e"/></svg>
<div class="lbl" style="left:1024px;top:506px;font-size:11px;letter-spacing:0.75px;color:#777;">Script</div>
<div class="fld" style="left:1190px;top:505px;width:257px;height:15px;border-color:#a9a9a9;background:#cdcdcd"><svg width="9" height="11" style="left:3px;top:1px"><rect x="0.5" y="0.5" width="8" height="10" fill="#dde" stroke="#99a"/><text x="4.5" y="9" font-size="7" text-anchor="middle" fill="#68a" font-family="Liberation Sans">c</text></svg><div class="ftxt" style="left:15px;color:#7a7a7a">FreeRoam</div></div>
<svg class="a" style="left:1454px;top:507px" width="10" height="10"><circle cx="5" cy="5" r="3.7" stroke="#777" stroke-width="1" fill="none"/><circle cx="5" cy="5" r="1.2" fill="#777"/></svg>
<div class="lbl" style="left:1024px;top:524px;font-size:11px;letter-spacing:0.75px;">Roam Radius</div>
<div class="fld" style="left:1190px;top:523px;width:276px;height:15px"><div class="ftxt" style="">28.59</div></div>
<div class="lbl" style="left:1024px;top:542px;font-size:11px;letter-spacing:0.75px;">Reset Pos Interval</div>
<div class="fld" style="left:1190px;top:541px;width:276px;height:15px"><div class="ftxt" style="">9.86</div></div>
<div class="a" style="left:1009px;top:560px;width:460px;height:1px;background:#8a8a8a"></div>
<div class="a" style="left:5px;top:569px;width:961px;height:527px;box-sizing:border-box;border:3px solid #cf4e4e;border-radius:3px"></div>
<svg style="left:8px;top:572px;will-change:transform" width="955" height="521" viewBox="8 572 955 521">
<rect x="8" y="572" width="955" height="521" fill="#1e2026"/>
<path d="M940.5 572.0L963.0 582.4M898.6 572.0L963.0 601.6M856.7 572.0L963.0 620.9M814.8 572.0L963.0 640.2M772.9 572.0L963.0 659.4M731.0 572.0L963.0 678.7M647.1 572.0L963.0 717.2M605.2 572.0L963.0 736.5M563.3 572.0L963.0 755.8M521.4 572.0L963.0 775.0M479.5 572.0L963.0 794.3M437.6 572.0L963.0 813.6M395.7 572.0L963.0 832.8M353.8 572.0L963.0 852.1M311.9 572.0L963.0 871.4M228.1 572.0L963.0 909.9M186.2 572.0L963.0 929.2M144.3 572.0L963.0 948.4M102.4 572.0L963.0 967.7M60.5 572.0L963.0 987.0M18.6 572.0L963.0 1006.2M8.0 586.4L963.0 1025.5M22.0 572.0L8.0 586.7M8.0 605.7L963.0 1044.8M49.7 572.0L8.0 615.8M8.0 624.9L963.0 1064.0M105.1 572.0L8.0 673.9M8.0 663.5L942.2 1093.0M132.8 572.0L8.0 703.0M8.0 682.7L900.3 1093.0M160.5 572.0L8.0 732.1M8.0 702.0L858.4 1093.0M188.2 572.0L8.0 761.2M8.0 721.3L816.5 1093.0M215.9 572.0L8.0 790.3M8.0 740.5L774.6 1093.0M243.6 572.0L8.0 819.4M8.0 759.8L732.7 1093.0M271.3 572.0L8.0 848.5M8.0 779.1L690.8 1093.0M299.0 572.0L8.0 877.6M8.0 798.3L648.9 1093.0M326.7 572.0L8.0 906.7M8.0 817.6L607.0 1093.0M382.1 572.0L8.0 964.9M8.0 856.1L523.2 1093.0M409.9 572.0L8.0 994.0M8.0 875.4L481.3 1093.0M437.6 572.0L8.0 1023.1M8.0 894.7L439.4 1093.0M465.3 572.0L8.0 1052.2M8.0 913.9L397.5 1093.0M493.0 572.0L8.0 1081.3M8.0 933.2L355.5 1093.0M520.7 572.0L24.6 1093.0M8.0 952.5L313.6 1093.0M548.4 572.0L52.3 1093.0M8.0 971.7L271.7 1093.0M576.1 572.0L80.0 1093.0M8.0 991.0L229.8 1093.0M603.8 572.0L107.7 1093.0M8.0 1010.3L187.9 1093.0M659.2 572.0L163.1 1093.0M8.0 1048.8L104.1 1093.0M686.9 572.0L190.8 1093.0M8.0 1068.1L62.2 1093.0M714.6 572.0L218.5 1093.0M8.0 1087.3L20.3 1093.0M742.3 572.0L246.2 1093.0M770.0 572.0L273.9 1093.0M797.7 572.0L301.6 1093.0M825.5 572.0L329.3 1093.0M853.2 572.0L357.0 1093.0M880.9 572.0L384.8 1093.0M936.3 572.0L440.2 1093.0M963.0 573.0L467.9 1093.0M963.0 602.1L495.6 1093.0M963.0 631.2L523.3 1093.0M963.0 660.3L551.0 1093.0M963.0 689.4L578.7 1093.0M963.0 718.5L606.4 1093.0M963.0 747.6L634.1 1093.0M963.0 776.7L661.8 1093.0M963.0 834.9L717.2 1093.0M963.0 864.0L744.9 1093.0M963.0 893.1L772.6 1093.0M963.0 922.2L800.4 1093.0M963.0 951.3L828.1 1093.0M963.0 980.4L855.8 1093.0M963.0 1009.5L883.5 1093.0M963.0 1038.6L911.2 1093.0M963.0 1067.7L938.9 1093.0" stroke="#ffffff" stroke-opacity="0.032" stroke-width="1" fill="none"/>
<path d="M689.0 572.0L963.0 698.0M270.0 572.0L963.0 890.6M77.4 572.0L8.0 644.9M8.0 644.2L963.0 1083.3M354.4 572.0L8.0 935.8M8.0 836.9L565.1 1093.0M631.5 572.0L135.4 1093.0M8.0 1029.5L146.0 1093.0M908.6 572.0L412.5 1093.0M963.0 805.8L689.5 1093.0" stroke="#ffffff" stroke-opacity="0.28" stroke-width="1" fill="none"/>
<g filter="url(#blur4)" opacity="0.42">
<path d="M68.9 572.0L73.5 631.0" stroke="#c8cacf" stroke-width="12.4" stroke-linecap="round" opacity="0.55"/>
<path d="M73.5 631.0L79.6 670.5" stroke="#c8cacf" stroke-width="14.4" stroke-linecap="round" opacity="0.55"/>
<path d="M79.6 670.5L87.2 716.0" stroke="#c8cacf" stroke-width="16.0" stroke-linecap="round" opacity="0.55"/>
<path d="M87.2 716.0L93.3 768.0" stroke="#c8cacf" stroke-width="17.2" stroke-linecap="round" opacity="0.55"/>
<path d="M93.3 768.0L99.4 813.7" stroke="#c8cacf" stroke-width="17.6" stroke-linecap="round" opacity="0.55"/>
<path d="M99.4 813.7L102.4 859.4" stroke="#c8cacf" stroke-width="17.6" stroke-linecap="round" opacity="0.55"/>
<path d="M102.4 859.4L107.0 905.0" stroke="#c8cacf" stroke-width="17.6" stroke-linecap="round" opacity="0.55"/>
<path d="M107.0 905.0L108.5 944.7" stroke="#c8cacf" stroke-width="16.0" stroke-linecap="round" opacity="0.55"/>
<circle cx="72.5" cy="575.6" r="3.1" fill="#c8cacf" opacity="0.18"/>
<circle cx="71.2" cy="578.7" r="6.2" fill="#c8cacf" opacity="0.26"/>
<circle cx="70.3" cy="583.3" r="5.9" fill="#c8cacf" opacity="0.21"/>
<circle cx="69.8" cy="587.5" r="6.7" fill="#c8cacf" opacity="0.50"/>
<circle cx="73.2" cy="593.7" r="5.4" fill="#c8cacf" opacity="0.24"/>
<circle cx="68.2" cy="596.0" r="5.6" fill="#c8cacf" opacity="0.26"/>
<circle cx="70.7" cy="606.6" r="6.0" fill="#c8cacf" opacity="0.35"/>
<circle cx="70.2" cy="606.6" r="5.0" fill="#c8cacf" opacity="0.20"/>
<circle cx="72.3" cy="618.1" r="7.1" fill="#c8cacf" opacity="0.21"/>
<circle cx="75.2" cy="622.2" r="7.5" fill="#c8cacf" opacity="0.47"/>
<circle cx="74.8" cy="627.5" r="5.4" fill="#c8cacf" opacity="0.49"/>
<circle cx="76.6" cy="628.7" r="7.9" fill="#c8cacf" opacity="0.40"/>
<circle cx="74.1" cy="636.8" r="6.4" fill="#c8cacf" opacity="0.47"/>
<circle cx="75.2" cy="644.6" r="5.7" fill="#c8cacf" opacity="0.46"/>
<circle cx="78.9" cy="647.7" r="7.1" fill="#c8cacf" opacity="0.47"/>
<circle cx="78.6" cy="653.5" r="5.0" fill="#c8cacf" opacity="0.26"/>
<circle cx="79.3" cy="656.8" r="9.5" fill="#c8cacf" opacity="0.24"/>
<circle cx="81.8" cy="663.5" r="10.0" fill="#c8cacf" opacity="0.40"/>
<circle cx="79.6" cy="670.6" r="8.1" fill="#c8cacf" opacity="0.36"/>
<circle cx="79.0" cy="673.3" r="7.3" fill="#c8cacf" opacity="0.48"/>
<circle cx="82.2" cy="677.3" r="9.5" fill="#c8cacf" opacity="0.40"/>
<circle cx="85.3" cy="683.3" r="9.1" fill="#c8cacf" opacity="0.17"/>
<circle cx="84.2" cy="688.9" r="5.6" fill="#c8cacf" opacity="0.46"/>
<circle cx="80.7" cy="696.0" r="10.0" fill="#c8cacf" opacity="0.24"/>
<circle cx="82.3" cy="703.9" r="7.1" fill="#c8cacf" opacity="0.40"/>
<circle cx="81.7" cy="704.8" r="5.3" fill="#c8cacf" opacity="0.39"/>
<circle cx="82.9" cy="714.7" r="4.3" fill="#c8cacf" opacity="0.41"/>
<circle cx="83.2" cy="714.0" r="10.2" fill="#c8cacf" opacity="0.20"/>
<circle cx="85.2" cy="722.8" r="7.1" fill="#c8cacf" opacity="0.17"/>
<circle cx="92.6" cy="723.5" r="4.5" fill="#c8cacf" opacity="0.27"/>
<circle cx="90.0" cy="733.7" r="5.1" fill="#c8cacf" opacity="0.27"/>
<circle cx="85.6" cy="736.4" r="10.0" fill="#c8cacf" opacity="0.41"/>
<circle cx="93.7" cy="744.2" r="10.8" fill="#c8cacf" opacity="0.40"/>
<circle cx="90.6" cy="744.8" r="9.3" fill="#c8cacf" opacity="0.26"/>
<circle cx="88.0" cy="751.9" r="11.0" fill="#c8cacf" opacity="0.19"/>
<circle cx="92.8" cy="756.7" r="8.3" fill="#c8cacf" opacity="0.20"/>
<circle cx="96.7" cy="760.7" r="9.0" fill="#c8cacf" opacity="0.30"/>
<circle cx="89.1" cy="768.5" r="5.5" fill="#c8cacf" opacity="0.17"/>
<circle cx="89.9" cy="770.1" r="5.1" fill="#c8cacf" opacity="0.37"/>
<circle cx="94.7" cy="782.4" r="11.6" fill="#c8cacf" opacity="0.50"/>
<circle cx="93.0" cy="782.7" r="6.3" fill="#c8cacf" opacity="0.36"/>
<circle cx="97.1" cy="791.0" r="9.9" fill="#c8cacf" opacity="0.24"/>
<circle cx="96.0" cy="793.6" r="4.4" fill="#c8cacf" opacity="0.16"/>
<circle cx="96.6" cy="795.0" r="10.0" fill="#c8cacf" opacity="0.23"/>
<circle cx="94.5" cy="800.7" r="6.2" fill="#c8cacf" opacity="0.23"/>
<circle cx="98.9" cy="808.3" r="6.8" fill="#c8cacf" opacity="0.37"/>
<circle cx="96.9" cy="817.3" r="11.8" fill="#c8cacf" opacity="0.41"/>
<circle cx="99.2" cy="818.9" r="8.9" fill="#c8cacf" opacity="0.17"/>
<circle cx="99.3" cy="824.1" r="5.8" fill="#c8cacf" opacity="0.18"/>
<circle cx="103.1" cy="827.8" r="8.4" fill="#c8cacf" opacity="0.47"/>
<circle cx="101.7" cy="832.2" r="12.0" fill="#c8cacf" opacity="0.28"/>
<circle cx="96.8" cy="840.7" r="5.2" fill="#c8cacf" opacity="0.26"/>
<circle cx="104.4" cy="845.7" r="4.5" fill="#c8cacf" opacity="0.31"/>
<circle cx="100.9" cy="849.1" r="6.0" fill="#c8cacf" opacity="0.36"/>
<circle cx="98.3" cy="852.4" r="7.3" fill="#c8cacf" opacity="0.48"/>
<circle cx="98.7" cy="861.6" r="5.9" fill="#c8cacf" opacity="0.35"/>
<circle cx="102.0" cy="864.1" r="10.2" fill="#c8cacf" opacity="0.29"/>
<circle cx="100.1" cy="866.2" r="5.0" fill="#c8cacf" opacity="0.45"/>
<circle cx="105.2" cy="878.6" r="9.7" fill="#c8cacf" opacity="0.16"/>
<circle cx="105.8" cy="882.1" r="10.0" fill="#c8cacf" opacity="0.32"/>
<circle cx="103.7" cy="884.4" r="10.6" fill="#c8cacf" opacity="0.24"/>
<circle cx="105.7" cy="889.6" r="11.8" fill="#c8cacf" opacity="0.43"/>
<circle cx="109.8" cy="897.8" r="6.7" fill="#c8cacf" opacity="0.23"/>
<circle cx="106.4" cy="897.8" r="7.7" fill="#c8cacf" opacity="0.39"/>
<circle cx="110.7" cy="905.8" r="10.7" fill="#c8cacf" opacity="0.18"/>
<circle cx="105.9" cy="915.1" r="5.4" fill="#c8cacf" opacity="0.30"/>
<circle cx="103.7" cy="912.8" r="10.7" fill="#c8cacf" opacity="0.50"/>
<circle cx="108.9" cy="918.9" r="6.2" fill="#c8cacf" opacity="0.23"/>
<circle cx="109.2" cy="929.2" r="7.0" fill="#c8cacf" opacity="0.33"/>
<circle cx="105.0" cy="933.7" r="10.2" fill="#c8cacf" opacity="0.41"/>
<circle cx="105.2" cy="939.2" r="8.4" fill="#c8cacf" opacity="0.24"/>
</g>
<ellipse cx="365" cy="1050" rx="60" ry="28" transform="rotate(50 365 1050)" fill="#70747a" fill-opacity="0.3" filter="url(#blur15)"/>
<ellipse cx="87" cy="707" rx="7" ry="12" fill="#e8631a" fill-opacity="0.55" filter="url(#blur3)"/>
<ellipse cx="87" cy="707" rx="5.5" ry="10" fill="url(#flame)"/>
<ellipse cx="87.3" cy="706" rx="3" ry="6.5" fill="#fffaf0"/>
<circle cx="89" cy="721" r="1.3" fill="#ffd27a"/><circle cx="90" cy="730" r="1.1" fill="#ffd27a"/><circle cx="91" cy="737" r="0.9" fill="#f0c070"/>
<path d="M85.3 681 L87.3 681 L87.8 692 L84.8 692Z" fill="#0a0a0a"/>
<path d="M106.6 901.6L179.4 801.3L395.7 877.3L322.9 977.6ZM179.4 801.3V841.3M395.7 877.3V917.3M106.6 901.6V941.6M322.9 977.6V1017.6" stroke="#43953f" stroke-opacity="1.0" stroke-width="1.0" fill="none"/>
<polygon points="194.5,868.6 224.5,868.6 313.0,880.2 336.1,901.3 360.6,910.8 364.7,920.4 357.9,943.5 347.0,963.9 314.3,981.6 228.5,942.1 178.2,914.9 174.1,895.8 178.2,879.5" fill="#555b63" fill-opacity="0.5" stroke="#6d82a6" stroke-opacity="0.6"/>
<polygon points="224.5,870.0 313.0,880.2 322.5,895.8 292.5,931.2 265.3,936.7 214.9,901.3" fill="#7a8088" fill-opacity="0.35"/>
<polygon points="313.0,931.2 357.9,943.5 347.0,963.9 314.3,981.6 299.3,958.5" fill="#7a8088" fill-opacity="0.35"/>
<polygon points="194.5,868.6 224.5,870.0 214.9,901.3 176.8,891.8" fill="#08090b" fill-opacity="0.65"/>
<polygon points="326.6,901.3 360.6,910.8 357.9,927.2 330.7,909.5" fill="#08090b" fill-opacity="0.65"/>
<polygon points="300.7,944.9 311.6,942.1 310.2,958.5 299.3,955.7" fill="#08090b" fill-opacity="0.65"/>
<polygon points="204.0,931.2 228.5,942.1 314.3,981.6 306.1,977.5 224.5,947.6" fill="#08090b" fill-opacity="0.65"/>
<path d="M156.2 907.9L201.6 846.7L380.9 910.0L335.5 971.2ZM201.6 846.7V869.2M380.9 910.0V932.5M156.2 907.9V930.4M335.5 971.2V993.7M156.2 930.4L335.5 993.7L380.9 932.5" stroke="#7ede6c" stroke-opacity="0.95" stroke-width="1.0" fill="none"/>
<path d="M197.0 928.5L320.0 977.5M197.9 931.5L320.9 979.3M198.8 934.5L321.8 981.1M230 872 L330 905 M215 920 L300 945" stroke="#7ede6c" stroke-opacity="0.7" fill="none"/>
<ellipse cx="217.7" cy="939.4" rx="4.2" ry="2.6" transform="rotate(22 217.7 939.4)" fill="none" stroke="#7ede6c" stroke-opacity="0.8"/>
<ellipse cx="235.4" cy="947.6" rx="4.2" ry="2.6" transform="rotate(22 235.4 947.6)" fill="none" stroke="#7ede6c" stroke-opacity="0.8"/>
<ellipse cx="251.7" cy="954.4" rx="4.2" ry="2.6" transform="rotate(22 251.7 954.4)" fill="none" stroke="#7ede6c" stroke-opacity="0.8"/>
<ellipse cx="274.8" cy="962.6" rx="4.2" ry="2.6" transform="rotate(22 274.8 962.6)" fill="none" stroke="#7ede6c" stroke-opacity="0.8"/>
<ellipse cx="295.3" cy="968.0" rx="4.2" ry="2.6" transform="rotate(22 295.3 968.0)" fill="none" stroke="#7ede6c" stroke-opacity="0.8"/>
<polygon points="243.5,920.4 254.4,895.8 273.5,883.6 292.5,879.5 311.6,880.2 321.1,890.4 324.5,906.7 318.4,920.4 300.7,931.2 278.9,934.0 259.9,931.2 246.2,925.8" fill="#0c0e10" fill-opacity="0.5"/><path d="M243.5 920.4L254.4 895.8L273.5 883.6L292.5 879.5L311.6 880.2L321.1 890.4L324.5 906.7L318.4 920.4L300.7 931.2L278.9 934.0L259.9 931.2L246.2 925.8ZM255.5 914.2L263.1 897.1L276.5 888.5L289.8 885.7L303.2 886.1L309.8 893.3L312.2 904.7L307.9 914.2L295.5 921.9L280.3 923.8L266.9 921.9L257.4 918.1ZM243.5 920.4L263.1 897.1M273.5 883.6L263.1 897.1M273.5 883.6L289.8 885.7M311.6 880.2L289.8 885.7M311.6 880.2L309.8 893.3M324.5 906.7L309.8 893.3M324.5 906.7L307.9 914.2M300.7 931.2L307.9 914.2M300.7 931.2L280.3 923.8M259.9 931.2L280.3 923.8M259.9 931.2L257.4 918.1M243.5 920.4L257.4 918.1" stroke="#7ede6c" stroke-width="1.0" stroke-opacity="0.9" fill="none"/>
<polygon points="130.1,926.0 262.6,909.0 261.4,900.0 128.9,917.0" fill="#0e100e" opacity="0.8"/><path d="M128.9 917.0L261.4 900.0M129.2 919.3L261.7 902.3M129.5 921.5L262.0 904.5M129.8 923.7L262.3 906.7M130.1 926.0L262.6 909.0" stroke="#86e676" stroke-opacity="1.0" stroke-width="1.3" fill="none"/><ellipse cx="129.5" cy="921.5" rx="2.5" ry="4.5" transform="rotate(-7.3 129.5 921.5)" fill="none" stroke="#86e676" stroke-opacity="1.0"/>
<g transform="translate(102.5 922.5) scale(0.62)"><path d="M-0.5 2.5 H5.2 L9.2 -0.6 V13.3 L5.2 9.5 H-0.5Z" fill="#111" opacity="0.7"/><path d="M0 3 H5 L8.6 0 V12.7 L5 9 H0Z" fill="#fff"/></g>
<g transform="translate(415.8 532.5)">
<path d="M492.3 82.4L479.9 69.2A7.2 3.6 -66.7 0 0 474.1 82.4Z" fill="#dcdcdc"/><ellipse cx="477.0" cy="75.8" rx="7.2" ry="3.6" transform="rotate(-66.7 477.0 75.8)" fill="#f4f4f4"/>
<path d="M492.3 91.8L479.0 97.8A6.5 2.9 -140.6 0 0 489.0 106.0Z" fill="#b8b8b8"/>
<path d="M500.1 95.0L493.5 106.5A6.6 2.1 180.0 0 0 506.7 106.5Z" fill="#e6e6e6"/>
<path d="M499.5 78.5L506.8 66.2A6.6 3.6 3.2 0 0 493.6 65.4Z" fill="#5fae2e"/><ellipse cx="500.2" cy="65.8" rx="6.6" ry="3.6" transform="rotate(3.2 500.2 65.8)" fill="#8be04a"/>
<path d="M506.3 79.3L519.5 72.2A6.6 3.3 35.6 0 0 508.7 64.6Z" fill="#2b66d0"/><ellipse cx="514.1" cy="68.4" rx="6.6" ry="3.3" transform="rotate(35.6 514.1 68.4)" fill="#3d8af2"/>
<path d="M491.8 82.3 L500.5 77 L509 81.6 L500.5 86.6Z" fill="#e4e4e4"/>
<path d="M491.8 82.3 L500.5 86.6 L500.5 95 L491.8 91.6Z" fill="#d2d2d2"/>
<path d="M500.5 86.6 L509 81.6 L508.5 91 L500.5 95Z" fill="#b6b6b6"/>
<path d="M507.1 89.4L520.1 101.8A6.4 2.9 112.8 0 0 525.1 90.0Z" fill="#e0401c"/><ellipse cx="522.6" cy="95.9" rx="6.4" ry="2.9" transform="rotate(112.8 522.6 95.9)" fill="#b02a14"/>
<text x="499.7" y="59.3" font-family="Liberation Sans" font-weight="bold" font-size="11" fill="#fff" stroke="#fff" stroke-width="0.3" text-anchor="middle">y</text>
<text x="522.7" y="66.8" font-family="Liberation Sans" font-weight="bold" font-size="11" fill="#fff" stroke="#fff" stroke-width="0.3" text-anchor="middle">z</text>
<text x="531" y="104" font-family="Liberation Sans" font-weight="bold" font-size="11" fill="#fff" stroke="#fff" stroke-width="0.3" text-anchor="middle">x</text>
</g>
</svg><div class="a" style="left:518px;top:656px;width:836px;height:640px;box-sizing:border-box;border:3px solid #cf4e4e;border-radius:3px"></div>
<div class="a" style="left:518px;top:656px;width:445px;height:3px;background:#1a0e0e"></div>
<div class="a" style="left:518px;top:656px;width:3px;height:437px;background:#1a0e0e"></div>
<svg style="left:521px;top:659px;will-change:transform" width="829" height="623" viewBox="521 659 829 623">
<rect x="521" y="659" width="829" height="623" fill="#1e2026"/>
<path d="M1323.6 659.0L1350.0 671.2M1281.8 659.0L1350.0 690.4M1240.0 659.0L1350.0 709.7M1198.1 659.0L1350.0 729.0M1156.3 659.0L1350.0 748.3M1072.7 659.0L1350.0 786.8M1030.8 659.0L1350.0 806.1M989.0 659.0L1350.0 825.4M947.2 659.0L1350.0 844.7M905.3 659.0L1350.0 864.0M863.5 659.0L1350.0 883.3M821.7 659.0L1350.0 902.5M779.9 659.0L1350.0 921.8M738.0 659.0L1350.0 941.1M654.4 659.0L1350.0 979.7M612.5 659.0L1350.0 999.0M521.0 659.0L521.0 659.0M570.7 659.0L1350.0 1018.2M548.7 659.0L521.0 688.1M528.9 659.0L1350.0 1037.5M576.3 659.0L521.0 717.1M521.0 674.6L1350.0 1056.8M604.0 659.0L521.0 746.2M521.0 693.9L1350.0 1076.1M631.6 659.0L521.0 775.2M521.0 713.2L1350.0 1095.4M659.3 659.0L521.0 804.2M521.0 732.5L1350.0 1114.6M687.0 659.0L521.0 833.3M521.0 751.8L1350.0 1133.9M742.3 659.0L521.0 891.4M521.0 790.3L1350.0 1172.5M769.9 659.0L521.0 920.4M521.0 809.6L1350.0 1191.8M797.6 659.0L521.0 949.5M521.0 828.9L1350.0 1211.1M825.2 659.0L521.0 978.5M521.0 848.2L1350.0 1230.3M852.9 659.0L521.0 1007.5M521.0 867.5L1350.0 1249.6M880.6 659.0L521.0 1036.6M521.0 886.7L1350.0 1268.9M908.2 659.0L521.0 1065.6M521.0 906.0L1336.6 1282.0M935.9 659.0L521.0 1094.7M521.0 925.3L1294.8 1282.0M963.5 659.0L521.0 1123.7M521.0 944.6L1252.9 1282.0M1018.8 659.0L521.0 1181.8M521.0 983.2L1169.3 1282.0M1046.5 659.0L521.0 1210.9M521.0 1002.4L1127.4 1282.0M1074.2 659.0L521.0 1239.9M521.0 1021.7L1085.6 1282.0M1101.8 659.0L521.0 1268.9M521.0 1041.0L1043.8 1282.0M1129.5 659.0L536.2 1282.0M521.0 1060.3L1002.0 1282.0M1157.1 659.0L563.9 1282.0M521.0 1079.6L960.1 1282.0M1184.8 659.0L591.5 1282.0M521.0 1098.9L918.3 1282.0M1212.4 659.0L619.2 1282.0M521.0 1118.1L876.5 1282.0M1240.1 659.0L646.9 1282.0M521.0 1137.4L834.6 1282.0M1295.4 659.0L702.2 1282.0M521.0 1176.0L751.0 1282.0M1323.1 659.0L729.8 1282.0M521.0 1195.3L709.2 1282.0M1350.0 659.8L757.5 1282.0M521.0 1214.5L667.3 1282.0M1350.0 688.8L785.1 1282.0M521.0 1233.8L625.5 1282.0M1350.0 717.8L812.8 1282.0M521.0 1253.1L583.7 1282.0M1350.0 746.9L840.5 1282.0M521.0 1272.4L541.8 1282.0M1350.0 775.9L868.1 1282.0M1350.0 805.0L895.8 1282.0M1350.0 834.0L923.4 1282.0M1350.0 892.1L978.7 1282.0M1350.0 921.2L1006.4 1282.0M1350.0 950.2L1034.0 1282.0M1350.0 979.2L1061.7 1282.0M1350.0 1008.3L1089.4 1282.0M1350.0 1037.3L1117.0 1282.0M1350.0 1066.4L1144.7 1282.0M1350.0 1095.4L1172.3 1282.0M1350.0 1124.5L1200.0 1282.0M1350.0 1182.6L1255.3 1282.0M1350.0 1211.6L1283.0 1282.0M1350.0 1240.6L1310.6 1282.0M1350.0 1269.7L1338.3 1282.0" stroke="#ffffff" stroke-opacity="0.032" stroke-width="1" fill="none"/>
<path d="M1114.5 659.0L1350.0 767.6M696.2 659.0L1350.0 960.4M714.6 659.0L521.0 862.3M521.0 771.1L1350.0 1153.2M991.2 659.0L521.0 1152.8M521.0 963.9L1211.1 1282.0M1267.8 659.0L674.5 1282.0M521.0 1156.7L792.8 1282.0M1350.0 863.1L951.1 1282.0M1350.0 1153.5L1227.6 1282.0" stroke="#ffffff" stroke-opacity="0.28" stroke-width="1" fill="none"/>
<ellipse cx="1150" cy="1190" rx="95" ry="42" transform="rotate(55 1150 1190)" fill="#70747a" fill-opacity="0.32" filter="url(#blur15)"/>
<ellipse cx="1005" cy="1250" rx="80" ry="38" transform="rotate(55 1005 1250)" fill="#70747a" fill-opacity="0.28" filter="url(#blur15)"/>
<ellipse cx="700" cy="1270" rx="60" ry="30" transform="rotate(55 700 1270)" fill="#70747a" fill-opacity="0.2" filter="url(#blur15)"/>
<g filter="url(#blur3)" opacity="0.34">
<path d="M762.0 1046.0L809.0 1003.5" stroke="#c8cacf" stroke-width="8.0" stroke-linecap="round" opacity="0.55"/>
<path d="M809.0 1003.5L850.0 968.0" stroke="#c8cacf" stroke-width="12.0" stroke-linecap="round" opacity="0.55"/>
<path d="M850.0 968.0L890.7 935.0" stroke="#c8cacf" stroke-width="16.0" stroke-linecap="round" opacity="0.55"/>
<path d="M890.7 935.0L956.0 882.6" stroke="#c8cacf" stroke-width="18.8" stroke-linecap="round" opacity="0.55"/>
<path d="M956.0 882.6L1021.4 833.6" stroke="#c8cacf" stroke-width="20.4" stroke-linecap="round" opacity="0.55"/>
<path d="M1021.4 833.6L1070.5 797.6" stroke="#c8cacf" stroke-width="21.2" stroke-linecap="round" opacity="0.55"/>
<path d="M1070.5 797.6L1119.5 761.7" stroke="#c8cacf" stroke-width="19.6" stroke-linecap="round" opacity="0.55"/>
<path d="M1119.5 761.7L1168.5 725.8" stroke="#c8cacf" stroke-width="14.8" stroke-linecap="round" opacity="0.55"/>
<path d="M1168.5 725.8L1191.4 706.0" stroke="#c8cacf" stroke-width="9.6" stroke-linecap="round" opacity="0.55"/>
<circle cx="762.6" cy="1047.2" r="3.8" fill="#c8cacf" opacity="0.48"/>
<circle cx="766.7" cy="1043.8" r="1.8" fill="#c8cacf" opacity="0.31"/>
<circle cx="771.3" cy="1039.4" r="4.5" fill="#c8cacf" opacity="0.19"/>
<circle cx="773.6" cy="1034.5" r="3.5" fill="#c8cacf" opacity="0.35"/>
<circle cx="775.9" cy="1030.8" r="2.8" fill="#c8cacf" opacity="0.47"/>
<circle cx="782.6" cy="1027.0" r="4.6" fill="#c8cacf" opacity="0.20"/>
<circle cx="786.0" cy="1023.3" r="2.0" fill="#c8cacf" opacity="0.45"/>
<circle cx="788.3" cy="1020.1" r="5.6" fill="#c8cacf" opacity="0.46"/>
<circle cx="792.5" cy="1019.6" r="4.1" fill="#c8cacf" opacity="0.39"/>
<circle cx="796.0" cy="1016.0" r="4.9" fill="#c8cacf" opacity="0.49"/>
<circle cx="802.9" cy="1009.7" r="3.7" fill="#c8cacf" opacity="0.21"/>
<circle cx="803.5" cy="1005.1" r="3.6" fill="#c8cacf" opacity="0.36"/>
<circle cx="806.7" cy="1004.3" r="3.8" fill="#c8cacf" opacity="0.26"/>
<circle cx="814.6" cy="999.9" r="3.9" fill="#c8cacf" opacity="0.32"/>
<circle cx="818.2" cy="994.2" r="7.1" fill="#c8cacf" opacity="0.16"/>
<circle cx="822.6" cy="994.7" r="2.8" fill="#c8cacf" opacity="0.43"/>
<circle cx="824.7" cy="989.7" r="2.9" fill="#c8cacf" opacity="0.17"/>
<circle cx="827.7" cy="988.4" r="4.0" fill="#c8cacf" opacity="0.41"/>
<circle cx="836.2" cy="984.9" r="5.0" fill="#c8cacf" opacity="0.27"/>
<circle cx="837.9" cy="980.4" r="3.9" fill="#c8cacf" opacity="0.41"/>
<circle cx="843.7" cy="977.4" r="3.6" fill="#c8cacf" opacity="0.48"/>
<circle cx="843.2" cy="970.5" r="7.2" fill="#c8cacf" opacity="0.47"/>
<circle cx="848.9" cy="971.0" r="7.0" fill="#c8cacf" opacity="0.26"/>
<circle cx="852.8" cy="962.4" r="4.2" fill="#c8cacf" opacity="0.20"/>
<circle cx="859.5" cy="965.1" r="4.8" fill="#c8cacf" opacity="0.17"/>
<circle cx="865.9" cy="958.4" r="6.6" fill="#c8cacf" opacity="0.23"/>
<circle cx="867.0" cy="957.3" r="7.0" fill="#c8cacf" opacity="0.30"/>
<circle cx="866.9" cy="954.8" r="4.2" fill="#c8cacf" opacity="0.32"/>
<circle cx="877.1" cy="945.2" r="9.3" fill="#c8cacf" opacity="0.48"/>
<circle cx="879.6" cy="947.3" r="4.9" fill="#c8cacf" opacity="0.30"/>
<circle cx="879.6" cy="944.5" r="6.4" fill="#c8cacf" opacity="0.31"/>
<circle cx="890.9" cy="941.3" r="11.7" fill="#c8cacf" opacity="0.31"/>
<circle cx="890.6" cy="937.0" r="8.1" fill="#c8cacf" opacity="0.25"/>
<circle cx="893.9" cy="928.6" r="7.4" fill="#c8cacf" opacity="0.50"/>
<circle cx="902.9" cy="929.6" r="8.4" fill="#c8cacf" opacity="0.27"/>
<circle cx="899.3" cy="923.1" r="10.7" fill="#c8cacf" opacity="0.45"/>
<circle cx="905.8" cy="924.5" r="10.7" fill="#c8cacf" opacity="0.39"/>
<circle cx="912.6" cy="921.0" r="7.5" fill="#c8cacf" opacity="0.40"/>
<circle cx="913.2" cy="915.2" r="10.9" fill="#c8cacf" opacity="0.39"/>
<circle cx="917.4" cy="916.2" r="10.0" fill="#c8cacf" opacity="0.35"/>
<circle cx="918.8" cy="909.2" r="6.8" fill="#c8cacf" opacity="0.39"/>
<circle cx="927.1" cy="908.5" r="10.1" fill="#c8cacf" opacity="0.43"/>
<circle cx="930.1" cy="903.6" r="10.9" fill="#c8cacf" opacity="0.44"/>
<circle cx="934.2" cy="902.2" r="12.1" fill="#c8cacf" opacity="0.39"/>
<circle cx="944.3" cy="900.1" r="9.2" fill="#c8cacf" opacity="0.34"/>
<circle cx="940.5" cy="895.7" r="12.9" fill="#c8cacf" opacity="0.32"/>
<circle cx="949.7" cy="891.3" r="11.2" fill="#c8cacf" opacity="0.21"/>
<circle cx="954.7" cy="886.7" r="10.7" fill="#c8cacf" opacity="0.30"/>
<circle cx="957.2" cy="885.3" r="10.6" fill="#c8cacf" opacity="0.40"/>
<circle cx="955.4" cy="876.1" r="8.9" fill="#c8cacf" opacity="0.38"/>
<circle cx="961.4" cy="878.3" r="10.6" fill="#c8cacf" opacity="0.16"/>
<circle cx="968.0" cy="870.7" r="5.5" fill="#c8cacf" opacity="0.20"/>
<circle cx="970.5" cy="867.1" r="6.8" fill="#c8cacf" opacity="0.16"/>
<circle cx="976.1" cy="866.1" r="10.5" fill="#c8cacf" opacity="0.36"/>
<circle cx="977.9" cy="868.3" r="5.1" fill="#c8cacf" opacity="0.29"/>
<circle cx="982.4" cy="860.2" r="6.1" fill="#c8cacf" opacity="0.44"/>
<circle cx="987.4" cy="853.4" r="10.6" fill="#c8cacf" opacity="0.18"/>
<circle cx="993.2" cy="853.4" r="10.3" fill="#c8cacf" opacity="0.49"/>
<circle cx="1000.1" cy="851.1" r="12.4" fill="#c8cacf" opacity="0.37"/>
<circle cx="999.6" cy="845.2" r="10.5" fill="#c8cacf" opacity="0.35"/>
<circle cx="1009.7" cy="850.7" r="10.6" fill="#c8cacf" opacity="0.27"/>
<circle cx="1013.2" cy="837.6" r="6.1" fill="#c8cacf" opacity="0.35"/>
<circle cx="1014.4" cy="836.0" r="10.9" fill="#c8cacf" opacity="0.46"/>
<circle cx="1016.0" cy="836.0" r="7.2" fill="#c8cacf" opacity="0.25"/>
<circle cx="1026.3" cy="832.4" r="13.9" fill="#c8cacf" opacity="0.47"/>
<circle cx="1026.5" cy="828.1" r="14.2" fill="#c8cacf" opacity="0.32"/>
<circle cx="1028.7" cy="825.7" r="14.2" fill="#c8cacf" opacity="0.32"/>
<circle cx="1031.4" cy="824.4" r="6.4" fill="#c8cacf" opacity="0.37"/>
<circle cx="1037.2" cy="819.4" r="12.5" fill="#c8cacf" opacity="0.44"/>
<circle cx="1036.7" cy="818.9" r="7.8" fill="#c8cacf" opacity="0.48"/>
<circle cx="1048.9" cy="812.9" r="7.8" fill="#c8cacf" opacity="0.20"/>
<circle cx="1055.2" cy="810.4" r="11.0" fill="#c8cacf" opacity="0.32"/>
<circle cx="1055.7" cy="810.7" r="12.3" fill="#c8cacf" opacity="0.19"/>
<circle cx="1061.0" cy="804.5" r="10.3" fill="#c8cacf" opacity="0.27"/>
<circle cx="1060.1" cy="803.9" r="9.7" fill="#c8cacf" opacity="0.28"/>
<circle cx="1069.0" cy="801.6" r="5.7" fill="#c8cacf" opacity="0.24"/>
<circle cx="1070.0" cy="802.1" r="13.8" fill="#c8cacf" opacity="0.34"/>
<circle cx="1069.3" cy="797.6" r="9.3" fill="#c8cacf" opacity="0.35"/>
<circle cx="1080.9" cy="793.0" r="9.6" fill="#c8cacf" opacity="0.47"/>
<circle cx="1081.6" cy="787.5" r="12.8" fill="#c8cacf" opacity="0.22"/>
<circle cx="1084.7" cy="789.0" r="5.7" fill="#c8cacf" opacity="0.44"/>
<circle cx="1092.9" cy="782.0" r="7.5" fill="#c8cacf" opacity="0.42"/>
<circle cx="1099.1" cy="776.1" r="9.0" fill="#c8cacf" opacity="0.34"/>
<circle cx="1099.1" cy="775.0" r="6.1" fill="#c8cacf" opacity="0.36"/>
<circle cx="1106.2" cy="769.5" r="6.6" fill="#c8cacf" opacity="0.44"/>
<circle cx="1110.0" cy="772.2" r="4.9" fill="#c8cacf" opacity="0.40"/>
<circle cx="1115.8" cy="772.3" r="10.2" fill="#c8cacf" opacity="0.17"/>
<circle cx="1118.5" cy="762.1" r="9.5" fill="#c8cacf" opacity="0.48"/>
<circle cx="1121.4" cy="758.4" r="6.7" fill="#c8cacf" opacity="0.47"/>
<circle cx="1120.5" cy="759.7" r="7.4" fill="#c8cacf" opacity="0.21"/>
<circle cx="1128.7" cy="751.8" r="5.0" fill="#c8cacf" opacity="0.28"/>
<circle cx="1128.2" cy="749.0" r="8.1" fill="#c8cacf" opacity="0.41"/>
<circle cx="1138.9" cy="746.8" r="6.9" fill="#c8cacf" opacity="0.26"/>
<circle cx="1140.7" cy="746.7" r="10.1" fill="#c8cacf" opacity="0.28"/>
<circle cx="1140.6" cy="745.3" r="4.7" fill="#c8cacf" opacity="0.37"/>
<circle cx="1148.1" cy="743.8" r="7.1" fill="#c8cacf" opacity="0.37"/>
<circle cx="1150.5" cy="738.1" r="5.0" fill="#c8cacf" opacity="0.41"/>
<circle cx="1156.4" cy="732.2" r="4.7" fill="#c8cacf" opacity="0.28"/>
<circle cx="1161.9" cy="729.6" r="7.3" fill="#c8cacf" opacity="0.38"/>
<circle cx="1161.7" cy="729.9" r="3.6" fill="#c8cacf" opacity="0.19"/>
<circle cx="1169.1" cy="724.2" r="7.6" fill="#c8cacf" opacity="0.32"/>
<circle cx="1171.3" cy="724.3" r="2.9" fill="#c8cacf" opacity="0.40"/>
<circle cx="1173.6" cy="717.2" r="6.9" fill="#c8cacf" opacity="0.39"/>
<circle cx="1178.5" cy="713.9" r="6.5" fill="#c8cacf" opacity="0.38"/>
<circle cx="1185.3" cy="710.9" r="4.6" fill="#c8cacf" opacity="0.27"/>
<circle cx="1186.4" cy="708.6" r="4.1" fill="#c8cacf" opacity="0.27"/>
</g>
<path d="M1199 697 L1223 680" stroke="#f06a1a" stroke-opacity="0.8" stroke-width="9" stroke-linecap="round" filter="url(#blur3)"/>
<path d="M1200 696.5 L1224 680" stroke="#ffb050" stroke-width="5.5" stroke-linecap="round"/>
<path d="M1203 694.5 L1223 681" stroke="#fffaf0" stroke-width="3" stroke-linecap="round"/>
<circle cx="1192" cy="703" r="1" fill="#d0a070"/><circle cx="1187" cy="707" r="0.8" fill="#a08060"/>
<polygon points="1307.3,889.6 1351,845 1351,993.3 1307.3,974" fill="#525a62"/>
<polygon points="1307.3,889.6 1351,845 1351,993.3 1307.3,974" fill="#000" filter="url(#noiseTex)" opacity="0.55"/>
<polygon points="1351,877 1344,886 1351,893" fill="#0c0d10"/>
<polygon points="728.2,1110.6 762.6,1102.7 798.0,1120.4 825.5,1171.6 857.0,1214.8 833.4,1232.5 798.0,1248.2 768.5,1246.3 707.5,1144.0 725.2,1113.6" fill="#353b43"/>
<polygon points="707.5,1144.0 725.2,1113.6 728.2,1110.6 744.9,1137.2 721.3,1148.0 758.6,1218.8 768.5,1246.3" fill="#46505c"/>
<polygon points="711.5,1155.8 721.3,1148.0 762.6,1226.6 768.5,1246.3" fill="#404a5a"/>
<polygon points="728.2,1110.6 762.6,1102.7 772.4,1132.2 744.9,1137.2" fill="#1a1c1f"/>
<polygon points="762.6,1102.7 798.0,1120.4 809.8,1140.1 772.4,1132.2" fill="#505860"/>
<polygon points="719.3,1142.1 744.9,1137.2 758.6,1167.6 731.1,1171.6" fill="#575f66"/>
<polygon points="758.6,1151.9 770.4,1149.9 774.4,1167.6 760.6,1171.6" fill="#15171a"/>
<polygon points="778.3,1148.0 817.6,1157.8 825.5,1171.6 786.2,1165.7" fill="#222428"/>
<polygon points="739.0,1171.6 817.6,1167.6 837.3,1197.1 766.5,1201.1" fill="#434a50"/>
<polygon points="741.0,1175.5 762.6,1175.5 772.4,1193.2 750.8,1197.1" fill="#1c1e22"/>
<polygon points="770.4,1175.5 798.0,1179.4 801.9,1191.2 774.4,1193.2" fill="#50575c"/>
<polygon points="786.2,1195.2 825.5,1197.1 835.3,1230.6 798.0,1228.6" fill="#5e666c"/>
<polygon points="821.6,1199.1 849.1,1203.0 857.0,1214.8 833.4,1224.7" fill="#18191c"/>
<polygon points="762.6,1216.8 790.1,1218.8 796.0,1234.5 768.5,1238.4" fill="#1a1c20"/>
<polygon points="768.5,1236.4 798.0,1234.5 801.9,1248.2 768.5,1246.3" fill="#5a6166"/>
<polygon points="801.9,1228.6 833.4,1232.5 798.0,1248.2" fill="#2a2e34"/>
<polygon points="774.4,1126.3 790.1,1122.4 801.9,1136.2 782.2,1140.1" fill="#5e666c"/>
<polygon points="790.1,1140.1 805.8,1140.1 807.8,1151.9 794.0,1153.9" fill="#5e666c"/>
<polygon points="801.9,1155.8 817.6,1153.9 821.6,1167.6 805.8,1169.6" fill="#2a2d32"/>
<polygon points="768.5,1179.4 790.1,1177.5 792.1,1191.2 772.4,1191.2" fill="#6e767e"/>
<polygon points="794.0,1207.0 817.6,1205.0 821.6,1218.8 798.0,1222.7" fill="#3a4046"/>
<polygon points="744.9,1140.1 758.6,1138.1 760.6,1148.0 746.9,1149.9" fill="#262a2e"/>
<polygon points="727.2,1151.9 739.0,1148.0 742.9,1159.8 731.1,1163.7" fill="#747b82"/>
<path d="M744.9 1081.1L776.3 1149.9" stroke="#0e0f10" stroke-width="4.6"/>
<path d="M744.1 1081.1L775.5 1149.9" stroke="#4a4e52" stroke-width="1.2"/>
<path d="M737.0 1066.4L744.9 1081.1" stroke="#0c0d0e" stroke-width="7.5" stroke-linecap="round"/>
<path d="M736.0 1066.4L743.7 1081.1" stroke="#5a5e62" stroke-width="1.3"/>
<g transform="translate(727 1048.5) scale(0.55)"><path d="M-0.5 2.5 H5.2 L9.2 -0.6 V13.3 L5.2 9.5 H-0.5Z" fill="#111" opacity="0.7"/><path d="M0 3 H5 L8.6 0 V12.7 L5 9 H0Z" fill="#fff"/></g>
<g transform="translate(804.7 617.5)">
<path d="M492.3 82.4L479.9 69.2A7.2 3.6 -66.7 0 0 474.1 82.4Z" fill="#dcdcdc"/><ellipse cx="477.0" cy="75.8" rx="7.2" ry="3.6" transform="rotate(-66.7 477.0 75.8)" fill="#f4f4f4"/>
<path d="M492.3 91.8L479.0 97.8A6.5 2.9 -140.6 0 0 489.0 106.0Z" fill="#b8b8b8"/>
<path d="M500.1 95.0L493.5 106.5A6.6 2.1 180.0 0 0 506.7 106.5Z" fill="#e6e6e6"/>
<path d="M499.5 78.5L506.8 66.2A6.6 3.6 3.2 0 0 493.6 65.4Z" fill="#5fae2e"/><ellipse cx="500.2" cy="65.8" rx="6.6" ry="3.6" transform="rotate(3.2 500.2 65.8)" fill="#8be04a"/>
<path d="M506.3 79.3L519.5 72.2A6.6 3.3 35.6 0 0 508.7 64.6Z" fill="#2b66d0"/><ellipse cx="514.1" cy="68.4" rx="6.6" ry="3.3" transform="rotate(35.6 514.1 68.4)" fill="#3d8af2"/>
<path d="M491.8 82.3 L500.5 77 L509 81.6 L500.5 86.6Z" fill="#e4e4e4"/>
<path d="M491.8 82.3 L500.5 86.6 L500.5 95 L491.8 91.6Z" fill="#d2d2d2"/>
<path d="M500.5 86.6 L509 81.6 L508.5 91 L500.5 95Z" fill="#b6b6b6"/>
<path d="M507.1 89.4L520.1 101.8A6.4 2.9 112.8 0 0 525.1 90.0Z" fill="#e0401c"/><ellipse cx="522.6" cy="95.9" rx="6.4" ry="2.9" transform="rotate(112.8 522.6 95.9)" fill="#b02a14"/>
<text x="499.7" y="59.3" font-family="Liberation Sans" font-weight="bold" font-size="11" fill="#fff" stroke="#fff" stroke-width="0.3" text-anchor="middle">y</text>
<text x="522.7" y="66.8" font-family="Liberation Sans" font-weight="bold" font-size="11" fill="#fff" stroke="#fff" stroke-width="0.3" text-anchor="middle">z</text>
<text x="531" y="104" font-family="Liberation Sans" font-weight="bold" font-size="11" fill="#fff" stroke="#fff" stroke-width="0.3" text-anchor="middle">x</text>
<path d="M482 133 H492 M482 135.8 H492 M482 138.6 H492" stroke="#c8c8c8" stroke-width="1"/>
<text x="496" y="140.3" font-family="Liberation Serif" font-size="11.5" fill="#d0d0d0" letter-spacing="0.8">Iso</text>
</g>
</svg></body></html>
